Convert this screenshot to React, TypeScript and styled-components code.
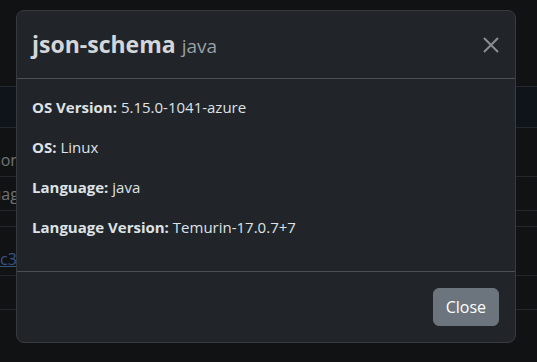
import styled, { createGlobalStyle } from 'styled-components';

const GlobalStyle = createGlobalStyle`
  html, body {
    margin: 0;
    padding: 0;
    background: #212529;
  }
  body {
    font-family: "Open Sans", "Noto Sans", "Liberation Sans", sans-serif;
    color: #dee2e6;
    overflow: hidden;
  }
`;

const rows = [
  { height: 41, head: true, text: '', indent: 0 },
  { height: 49, text: 'json', indent: -11, lift: 4 },
  { height: 34, text: 'language', indent: -40, lift: 4 },
  { height: 16, text: '', indent: 0 },
  { height: 49, text: 'c3', indent: 0, link: true, lift: 4 },
  { height: 34, text: '', indent: 0 },
  { height: 16, text: '', indent: 0 },
];

export default function App() {
  const info = [
    ['OS Version:', '5.15.0-1041-azure'],
    ['OS:', 'Linux'],
    ['Language:', 'java'],
    ['Language Version:', 'Temurin-17.0.7+7'],
  ];

  return (
    <Page>
      <GlobalStyle />
      <Table>
        {rows.map((row, i) => (
          <Row key={i} $height={row.height} $head={row.head} $lift={row.lift ?? 4}>
            {row.link ? (
              <RowLink>{row.text}</RowLink>
            ) : (
              <RowText $indent={row.indent}>{row.text}</RowText>
            )}
          </Row>
        ))}
      </Table>

      <Backdrop />
      <Dialog>
        <Modal>
          <Header>
            <Title>
              json-schema <Muted>java</Muted>
            </Title>
            <CloseX aria-label="Close">
              <svg width="16" height="16" viewBox="0 0 16 16">
                <path d="M1 1 L15 15 M15 1 L1 15" stroke="currentColor" strokeWidth="2" />
              </svg>
            </CloseX>
          </Header>
          <Body>
            {info.map(([label, value]) => (
              <Field key={label}>
                <Label>{label}</Label> {value}
              </Field>
            ))}
          </Body>
          <Footer>
            <Button>Close</Button>
          </Footer>
        </Modal>
      </Dialog>
    </Page>
  );
}

const Page = styled.div`
  position: relative;
  width: 100vw;
  height: 100vh;
  overflow: hidden;
`;

const Table = styled.div`
  display: flex;
  flex-direction: column;
  padding-top: 86px;
`;

const Row = styled.div<{ $height: number; $head?: boolean; $lift: number }>`
  height: ${(p) => p.$height}px;
  border-top: 1px solid #495057;
  background: ${(p) => (p.$head ? '#1c2833' : 'transparent')};
  display: flex;
  align-items: flex-end;
  padding-bottom: ${(p) => p.$lift}px;
  box-sizing: border-box;
  font-size: 16px;
  white-space: nowrap;
`;

const RowText = styled.span<{ $indent: number }>`
  color: #dee2e6;
  line-height: 24px;
  margin-left: ${(p) => p.$indent}px;
`;

const RowLink = styled.a`
  color: #6ea8fe;
  text-decoration: underline;
  line-height: 24px;
`;

const Backdrop = styled.div`
  position: absolute;
  inset: 0;
  background: rgba(0, 0, 0, 0.5);
`;

const Dialog = styled.div`
  position: absolute;
  inset: 0;
  padding: 10px 0 0 16px;
`;

const Modal = styled.div`
  width: 500px;
  box-sizing: border-box;
  background: #212529;
  border: 1px solid #373b3f;
  border-radius: 8px;
  display: flex;
  flex-direction: column;
`;

const Header = styled.div`
  display: flex;
  align-items: center;
  justify-content: space-between;
  padding: 16px 15px 16px 15px;
  height: 68px;
  box-sizing: border-box;
  border-bottom: 1px solid #495057;
`;

const Title = styled.h4`
  margin: 0;
  font-size: 23px;
  font-weight: 700;
  line-height: 36px;
  color: #d3d6da;
`;

const Muted = styled.small`
  font-size: 19px;
  font-weight: 400;
  color: #9a9fa5;
`;

const CloseX = styled.button`
  background: none;
  border: 0;
  padding: 0;
  width: 16px;
  height: 16px;
  margin-right: 1px;
  color: #8a8e92;
  display: flex;
`;

const Body = styled.div`
  padding: 16px 15px;
`;

const Field = styled.p`
  margin: 0 0 16px;
  font-size: 15px;
  line-height: 24px;
  color: #dee2e6;
`;

const Label = styled.strong`
  font-weight: 700;
`;

const Footer = styled.div`
  display: flex;
  justify-content: flex-end;
  padding: 12px;
  border-top: 1px solid #495057;
`;

const Button = styled.button`
  margin: 4px;
  height: 38px;
  padding: 6px 12px;
  font-family: inherit;
  font-size: 16px;
  line-height: 24px;
  color: #fff;
  background: #6c757d;
  border: 1px solid #6c757d;
  border-radius: 6px;
`;
